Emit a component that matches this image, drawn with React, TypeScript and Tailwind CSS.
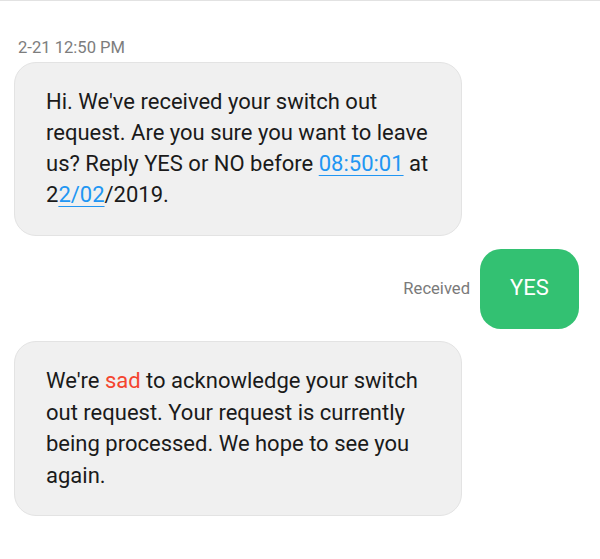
import React from "react";

export default function App() {
  return (
    <div
      className="w-[600px] h-[559px] bg-white border-t border-[#e2e2e2] overflow-hidden"
      style={{ fontFamily: "Roboto, 'Noto Sans', sans-serif" }}
    >
      <div className="pt-[37px] pl-[18px] text-[16.6px] leading-[20px] text-[#7d7d7d]">
        2-21 12:50 PM
      </div>
      <div className="mt-[4px] ml-[14px] w-[448px] h-[174px] rounded-[22px] bg-[#f0f0f0] border border-[#e3e3e3] pl-[31px] pr-[18px] pt-[23px] text-[22px] leading-[31.1px] text-[#1a1a1a]">
        Hi. We've received your switch out request. Are you sure you want to leave us? Reply YES or NO before{" "}
        <span className="text-[#2196f3] underline underline-offset-[4px] decoration-[1px]">08:50:01</span>{" "}
        at 2<span className="text-[#2196f3] underline underline-offset-[4px] decoration-[1px]">2/02</span>/2019.
      </div>
      <div className="mt-[13px] flex items-center justify-end pr-[21px]">
        <span className="text-[16.6px] text-[#7a7a7a] mr-[10px]">Received</span>
        <div className="w-[99px] h-[80px] rounded-[21px] bg-[#33c172] flex items-center justify-center text-white text-[22px] pb-[4px]">
          YES
        </div>
      </div>
      <div className="mt-[12px] ml-[14px] w-[448px] h-[175px] rounded-[22px] bg-[#f0f0f0] border border-[#e3e3e3] pl-[31px] pr-[18px] pt-[23px] text-[22px] leading-[31.6px] text-[#1a1a1a]">
        We're <span className="text-[#f4452f]">sad</span> to acknowledge your switch out request. Your request is currently being processed. We hope to see you again.
      </div>
    </div>
  );
}
